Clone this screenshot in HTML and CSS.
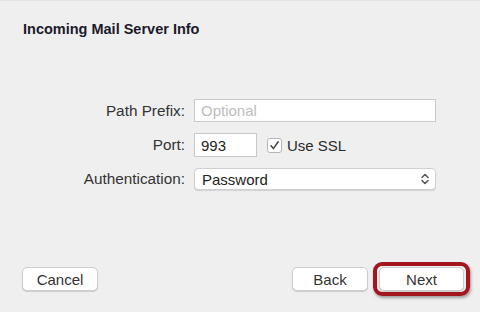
FILE: index.html
```html
<!DOCTYPE html>
<html>
<head>
<meta charset="utf-8">
<link rel="stylesheet" href="styles.css">
</head>
<body>
<div class="pane">
  <h1 class="title">Incoming Mail Server Info</h1>
  <div class="form">
    <label class="lbl">Path Prefix:</label>
    <div class="field wide placeholder">Optional</div>
    <label class="lbl">Port:</label>
    <div class="portrow">
      <div class="field port">993</div>
      <div class="check">
        <span class="box"><svg width="11" height="11" viewBox="0 0 11 11"><path d="M2 5.8 L4.4 8.6 L9.2 1.8" fill="none" stroke="#444" stroke-width="1.5" stroke-linecap="round" stroke-linejoin="round"/></svg></span>
        <span class="checklbl">Use SSL</span>
      </div>
    </div>
    <label class="lbl">Authentication:</label>
    <div class="select">
      <span>Password</span>
      <svg class="arrows" width="8" height="12" viewBox="0 0 8 12"><path d="M1 4.5 L4 1.5 L7 4.5 M1 7.5 L4 10.5 L7 7.5" fill="none" stroke="#555" stroke-width="1.5" stroke-linecap="round" stroke-linejoin="round"/></svg>
    </div>
  </div>
  <div class="buttons">
    <button class="btn cancel">Cancel</button>
    <div class="right">
      <button class="btn back">Back</button>
      <div class="highlight"><button class="btn next">Next</button></div>
    </div>
  </div>
</div>
</body>
</html>
```

FILE: styles.css
```css
html, body {
  margin: 0;
  padding: 0;
}
body {
  width: 480px;
  height: 312px;
  background: #efefef;
  font-family: "Liberation Sans", Arial, sans-serif;
  color: #2a2a2a;
  overflow: hidden;
}
.pane {
  height: 312px;
  box-sizing: border-box;
  border-top: 1px solid #e4e4e4;
  display: flex;
  flex-direction: column;
}
.title {
  margin: 19px 0 0 23px;
  font-size: 14.5px;
  font-weight: bold;
  color: #1c1a2a;
  line-height: 18px;
}
.form {
  margin: 61px 0 0 0;
  display: grid;
  grid-template-columns: 185px auto;
  column-gap: 9px;
  row-gap: 11px;
  align-items: center;
}
.lbl {
  text-align: right;
  font-size: 15.3px;
  color: #333;
}
.field {
  background: #fff;
  border: 1px solid #c9c9c9;
  box-sizing: border-box;
  font-size: 15px;
  padding: 0 6px;
  display: flex;
  align-items: center;
}
.wide {
  width: 242px;
  height: 23px;
}
.placeholder {
  color: #bdbdbd;
}
.portrow {
  display: flex;
  align-items: center;
}
.port {
  width: 63px;
  height: 24px;
  color: #222;
}
.check {
  display: flex;
  align-items: center;
  margin-left: 10px;
}
.box {
  width: 15px;
  height: 15px;
  box-sizing: border-box;
  border: 1px solid #b5b5b5;
  border-radius: 3px;
  background: #fff;
  display: flex;
  align-items: center;
  justify-content: center;
}
.checklbl {
  margin-left: 5px;
  font-size: 15px;
  color: #2a2a2a;
}
.select {
  width: 242px;
  height: 22px;
  box-sizing: border-box;
  background: #fff;
  border: 1px solid #cfcfcf;
  border-radius: 4px;
  box-shadow: 0 1px 1px rgba(0,0,0,0.12);
  display: flex;
  align-items: center;
  justify-content: space-between;
  padding: 0 6px 0 7px;
  font-size: 15px;
  color: #222;
}
.arrows {
  display: block;
}
.buttons {
  margin-top: auto;
  margin-bottom: 16px;
  display: flex;
  justify-content: space-between;
  align-items: center;
  padding: 0 10px 0 22px;
}
.right {
  display: flex;
  align-items: center;
  gap: 5px;
}
.btn {
  font-family: "Liberation Sans", Arial, sans-serif;
  font-size: 15px;
  color: #333;
  background: #fff;
  border: 1px solid #cdcdcd;
  border-radius: 5px;
  box-shadow: 0 1px 1px rgba(0,0,0,0.15);
  height: 24px;
  padding: 0;
  margin: 0;
}
.cancel, .back {
  width: 76px;
}
.next {
  width: 85px;
  display: block;
}
.highlight {
  border: 4px solid #a3161e;
  border-radius: 9px;
  padding: 1px 2px;
  box-shadow: 1px 2px 3px rgba(0,0,0,0.35);
}
```
